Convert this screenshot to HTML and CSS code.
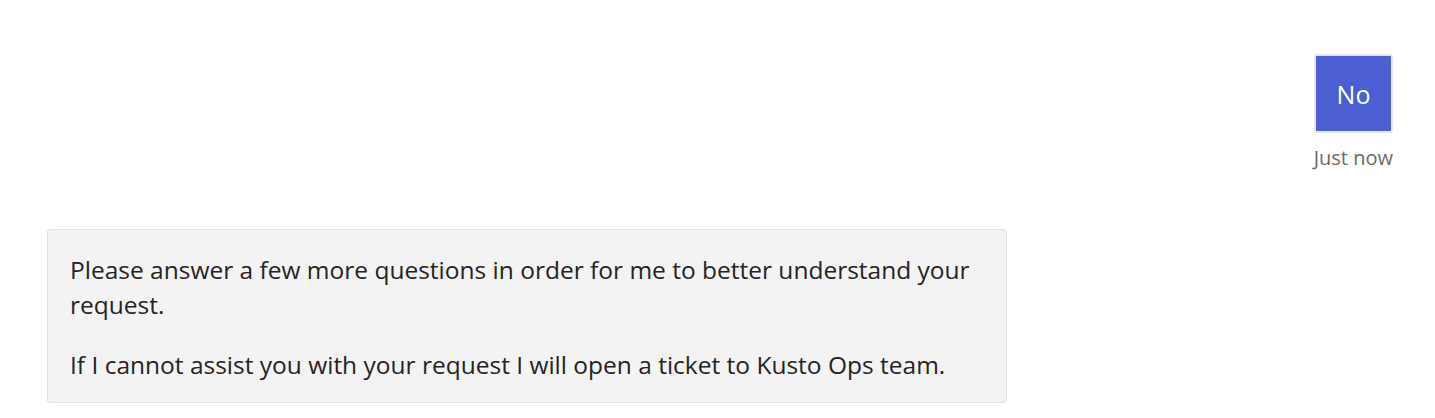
FILE: index.html
```html
<!DOCTYPE html>
<html>
<head>
<meta charset="utf-8">
<link rel="stylesheet" href="styles.css">
</head>
<body>
<div class="chat">
  <div class="user-msg">
    <div class="choice">No</div>
    <div class="time">Just now</div>
  </div>
  <div class="bot-msg">
    <div class="bubble">
      <p>Please answer a few more questions in order for me to better understand your request.</p>
      <p>If I cannot assist you with your request I will open a ticket to Kusto Ops team.</p>
    </div>
  </div>
</div>
</body>
</html>
```
FILE: styles.css
```css
html, body {
  margin: 0;
  padding: 0;
  background: #ffffff;
}
body {
  font-family: "Open Sans", "Noto Sans", sans-serif;
  color: #252423;
}
.chat {
  display: flex;
  flex-direction: column;
  padding: 54px 42px 0 47px;
}
.user-msg {
  display: flex;
  flex-direction: column;
  align-items: flex-end;
}
.choice {
  width: 75px;
  height: 75px;
  box-sizing: content-box;
  border: 2px solid #e6e6e6;
  border-radius: 3px;
  background: #4b5fd3;
  color: #ffffff;
  font-size: 25px;
  display: flex;
  align-items: center;
  justify-content: center;
}
.time {
  margin-top: 11px;
  font-size: 20px;
  color: #6b6b6b;
  line-height: 27px;
}
.bot-msg {
  margin-top: 58px;
  display: flex;
}
.bubble {
  width: 960px;
  box-sizing: border-box;
  background: #f3f3f3;
  border: 1px solid #e1e1e1;
  border-radius: 3px;
  padding: 22px 22px 20px 22px;
  font-size: 24.5px;
  line-height: 35px;
}
.bubble p {
  margin: 0;
}
.bubble p + p {
  margin-top: 25px;
}
```
